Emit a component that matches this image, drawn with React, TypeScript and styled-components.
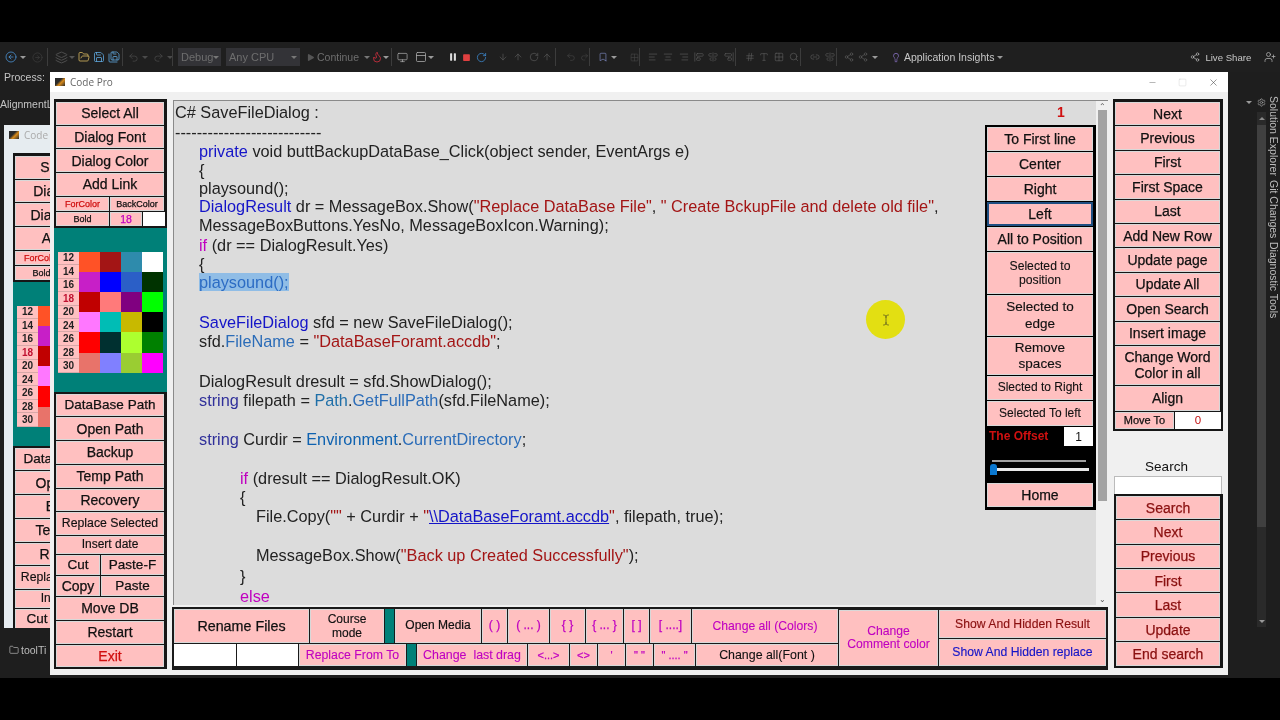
import React from "react";
import styled, { createGlobalStyle } from "styled-components";
import {
  CircleArrowLeft, CircleArrowRight, Layers, FolderOpen, Save, SaveAll, Undo2, Redo2, Play, Flame,
  Monitor, PanelTop, Pause, Square, RotateCw, ArrowDown, ArrowUp, Bookmark, Grid2x2, AlignLeft, AlignCenter,
  AlignRight, AlignStartVertical, AlignCenterVertical, AlignEndVertical, Search, Hash, Minus, X,
  Lightbulb, Share2, UserPlus, Settings, Folder, Link2, Type, TextCursor
} from "lucide-react";

const Global = createGlobalStyle`
  html, body { margin: 0; padding: 0; background: #000; }
  body { font-family: "Liberation Sans", Arial, sans-serif; overflow: hidden; }
  * { box-sizing: border-box; }
`;

const PINK = "#ffc0c0";
const TEAL = "#008078";

const Desktop = styled.div`
  position: relative; width: 1280px; height: 720px; background: #000; overflow: hidden;
  display: flex; flex-direction: column; filter: blur(0.35px);
`;
const Letterbox = styled.div`height: ${p => p.$h}px; flex: none; background: #000;`;
const Studio = styled.div`
  flex: 1; background: #1e1e1e; display: flex; flex-direction: column; color: #c8c8c8; min-height: 0;
`;
const Toolbar = styled.div`
  height: 30px; flex: none; display: flex; align-items: center; position: relative; background: #1f1f1f;
  font-size: 10.5px;
`;
const Slot = styled.span`
  width: ${p => p.$w}px; flex: none; display: flex; align-items: center; color: ${p => p.$c || "#5a5a5a"};
`;
const Caret = styled.span`
  width: 0; height: 0; border-left: 3px solid transparent; border-right: 3px solid transparent;
  border-top: 3px solid ${p => p.$c || "#9a9a9a"};
`;
const CaretUp = styled(Caret)`
  border-top: none; border-bottom: 3px solid #8a8a8a; flex: none;
`;
const Sep = styled.span`width: 1px; height: 18px; background: #3c3c3c;`;
const Combo = styled.span`
  width: ${p => p.$w}px; height: 18px; flex: none; background: #333337; color: #6e6e6e; display: flex;
  align-items: center; justify-content: space-between; padding: 0 3px; font-size: 11px; margin-right: ${p => p.$mr}px;
`;
const DimLabel = styled.span`font-size: ${p => p.$fs || 10.5}px; color: ${p => p.$c || "#6e6e6e"}; white-space: nowrap;`;
const StudioBody = styled.div`flex: 1; display: flex; min-height: 0;`;
const LeftPane = styled.div`flex: 1; display: flex; flex-direction: column; padding-left: 4px;`;
const ProcessRow = styled.div`height: 10px; font-size: 10.5px; display: flex; align-items: center; color: #c4c4c4;`;
const TabText = styled.div`margin: 16px 0 0 -4px; font-size: 10.5px; color: #c4c4c4;`;
const StatusText = styled.div`
  margin-top: auto; margin-bottom: 22px; margin-left: 5px; font-size: 10.5px; color: #bdbdbd; display: flex; align-items: center; gap: 2px;
`;
const RightRail = styled.div`width: 280px; flex: none; display: flex; justify-content: flex-end; padding-top: 24px;`;
const ScrollCol = styled.div`width: 22px; margin-right: 0; flex: none; display: flex; flex-direction: column; align-items: flex-end;`;
const RailHead = styled.div`height: 16px; width: 100%; flex: none; display: flex; align-items: center; justify-content: space-between; padding: 0 0 4px 2px;`;
const ScrollTrack = styled.div`
  width: 9px; height: 515px; flex: none; background: #2a2a2a; display: flex; flex-direction: column; align-items: center; padding-top: 5px;
`;
const ScrollThumb = styled.div`width: 9px; height: 402px; margin-top: 5px; background: #404040;`;
const TrackEnd = styled(Caret)`margin-top: auto; margin-bottom: 4px; flex: none;`;
const RailCol = styled.div`
  writing-mode: vertical-rl; font-size: 10.5px; color: #bcbcbc; width: 14px; height: 230px; display: flex; gap: 4px; white-space: nowrap;
  flex: none;
`;
const Folded = styled(Settings)`color: #999;`;

/* windows on the desktop */
const Win = styled.div`
  position: absolute; left: ${p => p.$x}px; top: ${p => p.$y}px; width: ${p => p.$w}px; height: ${p => p.$h}px;
  background: ${p => p.$bg}; overflow: hidden; display: flex; flex-direction: column;
`;
const TitleBar = styled.div`
  height: 20px; flex: none; background: ${p => p.$bg || "#fff"}; display: flex; align-items: center; padding-left: 5px;
  font-size: 10px; color: ${p => p.$c || "#666"}; gap: 5px; font-family: "Open Sans", "Liberation Sans", sans-serif;
`;
const AppIcon = styled.span`
  width: 10px; height: 8px; flex: none; background: linear-gradient(135deg, #2a2a2a 40%, #d88a1a 60%, #2a2a2a);
`;
const WinControls = styled.div`margin-left: auto; display: flex; align-items: center; color: #777; padding-right: 9px; gap: 21px;`;
const WinBody = styled.div`flex: 1; display: flex; gap: 5px; padding: ${p => p.$pad}; min-height: 0; background: ${p => p.$bg};`;

const SideCol = styled.div`width: 113px; flex: none; display: flex; flex-direction: column;`;
const Panel = styled.div`
  background: #161616; padding: ${p => p.$pt ?? 3}px 3px 2px 2px; margin-left: ${p => p.$ml || 0}px;
  display: flex; flex-direction: column; gap: 1px; flex: none;
`;
const Btn = styled.div`
  height: ${p => (p.$h ? p.$h + "px" : "auto")}; flex: ${p => (p.$grow ? "1 1 0" : "none")}; width: ${p => (p.$w ? p.$w + "px" : "auto")};
  background: ${PINK}; border: 1px solid #d8d8d8; color: ${p => p.$c || "#111"}; font-size: ${p => p.$fs || 14}px;
  display: flex; align-items: center; justify-content: center; text-align: center; line-height: ${p => p.$lh || "1.15"};
  white-space: nowrap; -webkit-text-stroke: ${p => p.$st ?? 0.25}px ${p => p.$c || "#111"}; overflow: hidden;
`;
const FocusBtn = styled(Btn)`border: 2px solid #1f4f82;`;
const Row = styled.div`display: flex; gap: 1px; flex: none;`;
const WhiteCell = styled.div`
  height: ${p => p.$h}px; width: ${p => p.$w}px; flex: none; background: #fff; color: ${p => p.$c || "#111"}; font-size: ${p => p.$fs || 12}px;
  display: flex; align-items: center; justify-content: center;
`;
const PalettePanel = styled.div`
  height: 164px; flex: none; background: ${TEAL}; padding: 24px 0 0 4px; display: flex;
`;
const Sizes = styled.div`
  width: 21px; height: 121px; flex: none; background: ${PINK}; display: grid; grid-template-rows: repeat(9, 1fr);
`;
const Size = styled.div`
  font-size: 10px; font-weight: 700; color: ${p => (p.$on ? "#c01030" : "#222")}; display: flex; align-items: center; justify-content: center;
  border-bottom: 1px solid #d8a8a8;
`;
const Swatches = styled.div`
  width: 84px; height: 121px; flex: none; display: grid; grid-template-columns: repeat(4, 1fr); grid-template-rows: repeat(6, 1fr);
`;
const Swatch = styled.div`background: ${p => p.$c};`;

const Center = styled.div`flex: 1; min-width: 0; display: flex; flex-direction: column; gap: 2px;`;
const EditorWrap = styled.div`
  position: relative; height: 505px; flex: none; display: flex; border-top: 1px solid #8a8a8a; border-left: 1px solid #8a8a8a; margin: 1px 0 0 1px;
  background: #dcdcdc;
`;
const Editor = styled.div`
  flex: 1; min-width: 0; padding: 1px 0 0 1px; overflow: hidden; font-size: 16.3px; color: #222;
  font-family: "Liberation Sans", Arial, sans-serif;
`;
const Line = styled.div`padding-left: ${p => p.$i || 0}px; height: ${p => p.$h}px; line-height: ${p => p.$h}px; white-space: nowrap;`;
const Tok = styled.span`color: ${p => p.$c}; text-decoration: ${p => (p.$u ? "underline" : "none")};`;
const Selected = styled.span`background: #90bde6; color: #2c6cc4;`;
const Scroll = styled.div`
  width: 12px; flex: none; background: #f0f0f0; display: flex; flex-direction: column; align-items: center; justify-content: space-between; color: #555;
  font-size: 8px;
`;
const Thumb = styled.div`width: 9px; height: 392px; background: #a3a3a3; margin-bottom: 93px; margin-top: -2px;`;
const Arrow = styled.span`height: 11px; line-height: 11px; color: #555; font-size: 8px;`;
const Counter = styled.div`
  position: absolute; left: 883px; top: 3px; color: #d01010; font-size: 14px; font-weight: 700;
`;
const FloatPanel = styled.div`
  position: absolute; left: 811px; top: 24px; width: 111px; background: #000; padding: 2px 3px 3px 2px; display: flex; flex-direction: column; gap: 1px;
`;
const OffsetBlock = styled.div`height: 55px; flex: none; background: #000; display: flex; flex-direction: column;`;
const OffsetHead = styled.div`display: flex; justify-content: space-between; align-items: center; height: 19px;`;
const OffsetLabel = styled.span`color: #d01010; font-size: 12px; font-weight: 700; padding-left: 2px; margin-top: -1px;`;
const SliderBox = styled.div`position: relative; height: 20px; margin: 14px 0 0 3px; width: 100px;`;
const TrackTop = styled.div`position: absolute; left: 2px; top: 0; width: 94px; height: 2px; background: #a0a0a0;`;
const TrackMain = styled.div`position: absolute; left: 2px; top: 8px; width: 97px; height: 3px; background: #e8e8e8;`;
const SliderThumb = styled.div`
  position: absolute; left: 0; top: 4px; width: 7px; height: 11px; background: #0a78d0; border-radius: 3px 3px 0 0;
`;

const Bottom = styled.div`
  height: 63px; flex: none; background: #1a1a1a; padding: 2px 2px 4px; display: flex; gap: 1px;
`;
const BottomLeft = styled.div`width: 664px; flex: none; display: flex; flex-direction: column; gap: 1px;`;
const BottomRow = styled.div`display: flex; gap: 1px; height: ${p => p.$h}px; flex: none; min-height: 0;`;
const TealGap = styled.div`width: ${p => p.$w}px; flex: none; background: ${TEAL};`;
const BottomStack = styled.div`
  flex: ${p => (p.$w ? "none" : 1)}; width: ${p => (p.$w ? p.$w + "px" : "auto")};
  display: flex; flex-direction: column; gap: 1px; margin-top: 1px;
`;

const RightCol = styled.div`width: 110px; flex: none; display: flex; flex-direction: column;`;
const SearchLabel = styled.div`margin-top: 28px; height: 15px; text-align: center; font-size: 13.5px; color: #111; line-height: 15px; padding-right: 3px;`;
const SearchInput = styled.div`height: 18px; margin: 2px 1px 0; background: #fff; border: 1px solid #bbb; border-bottom: none;`;

const Cursor = styled.div`
  position: absolute; left: 692px; top: 199px; width: 39px; height: 39px; border-radius: 50%; background: #e3df12;
  display: flex; align-items: center; justify-content: center; color: #5a5a20;
`;

const M = "#c000c0";
const B = "#1515c8";
const S = "#a31515";
const L = "#2b6cb8";

const code: [number, number, React.ReactNode][] = [
  [0, 20, <>C# SaveFileDialog :</>],
  [0, 20, <>---------------------------</>],
  [24, 18.5, <><Tok $c={B}>private</Tok> void buttBackupDataBase_Click(object sender, EventArgs e)</>],
  [24, 18, <>{"{"}</>],
  [24, 18.5, <>playsound();</>],
  [24, 19, <><Tok $c={B}>DialogResult</Tok> dr = MessageBox.Show(<Tok $c={S}>"Replace DataBase File"</Tok>, <Tok $c={S}>" Create BckupFile and delete old file"</Tok>,</>],
  [24, 19.5, <>MessageBoxButtons.YesNo, MessageBoxIcon.Warning);</>],
  [24, 19, <><Tok $c={M}>if</Tok> (dr == DialogResult.Yes)</>],
  [24, 18, <>{"{"}</>],
  [24, 19.5, <Selected>playsound();</Selected>],
  [24, 19.5, <>&nbsp;</>],
  [24, 20, <><Tok $c={B}>SaveFileDialog</Tok> sfd = new SaveFileDialog();</>],
  [24, 19.5, <>sfd.<Tok $c={L}>FileName</Tok> = <Tok $c={S}>"DataBaseForamt.accdb"</Tok>;</>],
  [24, 19.5, <>&nbsp;</>],
  [24, 20, <>DialogResult dresult = sfd.ShowDialog();</>],
  [24, 19.5, <><Tok $c="#30309a">string</Tok> filepath = <Tok $c="#1f6fa8">Path</Tok>.<Tok $c={L}>GetFullPath</Tok>(sfd.FileName);</>],
  [24, 19.5, <>&nbsp;</>],
  [24, 19.5, <><Tok $c="#30309a">string</Tok> Curdir = <Tok $c="#0f62b0">Environment</Tok>.<Tok $c={L}>CurrentDirectory</Tok>;</>],
  [24, 19.5, <>&nbsp;</>],
  [65, 19.5, <><Tok $c={M}>if</Tok> (dresult == DialogResult.OK)</>],
  [65, 19, <>{"{"}</>],
  [81, 19.5, <>File.Copy(<Tok $c={S}>""</Tok> + Curdir + <Tok $c={S}>"</Tok><Tok $c="#1515c8" $u>\\DataBaseForamt.accdb</Tok><Tok $c={S}>"</Tok>, filepath, true);</>],
  [81, 19.5, <>&nbsp;</>],
  [81, 19.5, <>MessageBox.Show(<Tok $c={S}>"Back up Created Successfully"</Tok>);</>],
  [65, 20, <>{"}"}</>],
  [65, 20, <Tok $c={M}>else</Tok>],
];

const colors = [
  "#ff5226", "#a31515", "#2e8bac", "#ffffff",
  "#c71fc7", "#0000ff", "#2b5fc7", "#003300",
  "#c00000", "#ff7a7a", "#800080", "#00ff00",
  "#ff77ff", "#00bdb5", "#c8b900", "#000000",
  "#ff0000", "#003030", "#adff2f", "#008000",
  "#e8736a", "#8080ff", "#9acd32", "#ff00ff",
];
const sizes = ["12", "14", "16", "18", "20", "24", "26", "28", "30"];

const LeftColumn = () => (
  <SideCol>
    <Panel>
      <Btn $h={22.7}>Select All</Btn>
      <Btn $h={22.7}>Dialog Font</Btn>
      <Btn $h={22.7}>Dialog Color</Btn>
      <Btn $h={22.7}>Add Link</Btn>
      <Row>
        <Btn $h={14} $w={53} $fs={9} $c="#d01010">ForColor</Btn>
        <Btn $h={14} $grow $fs={9}>BackColor</Btn>
      </Row>
      <Row>
        <Btn $h={14} $w={53} $fs={9}>Bold</Btn>
        <Btn $h={14} $w={32} $fs={10.5} $c={M}>18</Btn>
        <WhiteCell $h={14} $w={22} />
      </Row>
    </Panel>
    <PalettePanel>
      <Sizes>{sizes.map(s => <Size key={s} $on={s === "18"}>{s}</Size>)}</Sizes>
      <Swatches>{colors.map((c, i) => <Swatch key={i} $c={c} />)}</Swatches>
    </PalettePanel>
    <Panel $pt={2}>
      <Btn $h={22.7} $fs={13.5}>DataBase Path</Btn>
      <Btn $h={22.7}>Open Path</Btn>
      <Btn $h={22.7}>Backup</Btn>
      <Btn $h={22.7}>Temp Path</Btn>
      <Btn $h={22.7}>Recovery</Btn>
      <Btn $h={22.7} $fs={12.3} $st={0.15}>Replace Selected</Btn>
      <Btn $h={18} $fs={12} $st={0.15}>Insert date</Btn>
      <Row>
        <Btn $h={20} $w={44} $fs={13.5}>Cut</Btn>
        <Btn $h={20} $grow $fs={13.5}>Paste-F</Btn>
      </Row>
      <Row>
        <Btn $h={20} $w={44} $fs={14}>Copy</Btn>
        <Btn $h={20} $grow $fs={13.5}>Paste</Btn>
      </Row>
      <Btn $h={23}>Move DB</Btn>
      <Btn $h={22.7}>Restart</Btn>
      <Btn $h={22.7} $c="#d01010">Exit</Btn>
    </Panel>
  </SideCol>
);

type TI = { w: number; el?: React.ReactNode; c?: string };
const ic = (I: any, s = 13) => <I size={s} strokeWidth={1.6} />;
const tools: TI[] = [
  { w: 5 },
  { w: 15, el: ic(CircleArrowLeft, 12), c: "#4a90d0" },
  { w: 12, el: <Caret /> },
  { w: 15, el: ic(CircleArrowRight, 11), c: "#3c3c3c" },
  { w: 8, el: <Sep /> },
  { w: 14, el: ic(Layers), c: "#555" },
  { w: 9, el: <Caret $c="#555" /> },
  { w: 15, el: ic(FolderOpen, 12), c: "#d8b860" },
  { w: 15, el: ic(Save, 12), c: "#5fa8e0" },
  { w: 14, el: ic(SaveAll, 12), c: "#5fa8e0" },
  { w: 6, el: <Sep /> },
  { w: 14, el: ic(Undo2, 11), c: "#4a4a4a" },
  { w: 11, el: <Caret $c="#4a4a4a" /> },
  { w: 14, el: ic(Redo2, 11), c: "#4a4a4a" },
  { w: 5, el: <Caret $c="#4a4a4a" /> },
  { w: 6, el: <Sep /> },
  { w: 48, el: <Combo $w={43} $mr={5}>Debug<Caret $c="#777" /></Combo> },
  { w: 80, el: <Combo $w={74} $mr={6}>Any CPU<Caret $c="#777" /></Combo> },
  { w: 11, el: <Play size={9} fill="#555" strokeWidth={0} />, c: "#555" },
  { w: 47, el: <DimLabel>Continue</DimLabel> },
  { w: 7, el: <Caret $c="#777" /> },
  { w: 12, el: ic(Flame, 12), c: "#d83040" },
  { w: 8, el: <Caret /> },
  { w: 6, el: <Sep /> },
  { w: 18, el: ic(Monitor, 11), c: "#aaa" },
  { w: 13, el: ic(PanelTop, 12), c: "#aaa" },
  { w: 5, el: <Caret /> },
  { w: 15 },
  { w: 14, el: <Pause size={10} fill="#ddd" strokeWidth={0} />, c: "#ddd" },
  { w: 14, el: <Square size={9} fill="#e04040" strokeWidth={0} />, c: "#e04040" },
  { w: 22, el: ic(RotateCw, 11), c: "#3f8fd8" },
  { w: 15, el: ic(ArrowDown, 10) },
  { w: 16, el: ic(ArrowUp, 10) },
  { w: 13, el: ic(RotateCw, 10) },
  { w: 13, el: ic(ArrowUp, 10) },
  { w: 11, el: <Sep /> },
  { w: 14, el: ic(Undo2, 10), c: "#444" },
  { w: 9, el: ic(Redo2, 10), c: "#444" },
  { w: 9, el: <Sep /> },
  { w: 13, el: ic(Bookmark, 10), c: "#7d8ac0" },
  { w: 19, el: <Caret /> },
  { w: 9, el: ic(Grid2x2, 9), c: "#444" },
  { w: 9, el: <Sep /> },
  { w: 15, el: ic(AlignLeft, 10) },
  { w: 16, el: ic(AlignCenter, 10) },
  { w: 15, el: ic(AlignRight, 10) },
  { w: 14, el: ic(AlignStartVertical, 10) },
  { w: 16, el: ic(AlignCenterVertical, 10) },
  { w: 11, el: ic(AlignEndVertical, 10) },
  { w: 10, el: <Sep /> },
  { w: 14, el: ic(Hash, 10) },
  { w: 15, el: ic(Type, 10) },
  { w: 15, el: ic(Grid2x2, 10) },
  { w: 11, el: ic(Search, 10) },
  { w: 10, el: <Sep /> },
  { w: 15, el: ic(Link2, 10) },
  { w: 11, el: ic(AlignCenterVertical, 10) },
  { w: 8, el: <Sep /> },
  { w: 14, el: ic(Share2, 10) },
  { w: 14, el: ic(Share2, 10) },
  { w: 19, el: <Caret /> },
  { w: 10, el: ic(Lightbulb, 11), c: "#9a7fe0" },
];

export default function App() {
  return (
    <Desktop>
      <Global />
      <Letterbox $h={42} />
      <Studio>
        <Toolbar>
          {tools.map((t, i) => <Slot key={i} $w={t.w} $c={t.c}>{t.el}</Slot>)}
          <DimLabel $c="#c8c8c8">&nbsp;Application Insights</DimLabel>
          <Slot $w={18} $c="#aaa">&nbsp;<Caret /></Slot>
          <Slot $w={178} />
          <Slot $w={15} $c="#bbb">{ic(Share2, 10)}</Slot>
          <DimLabel $c="#c8c8c8" $fs={9.6}>Live Share</DimLabel>
          <Slot $w={13} />
          <Slot $w={14} $c="#aaa">{ic(UserPlus, 12)}</Slot>
        </Toolbar>
        <StudioBody>
          <LeftPane>
            <ProcessRow>Process:</ProcessRow>
            <TabText>AlignmentLi</TabText>
            <StatusText><Folder size={10} strokeWidth={1.6} />toolTi</StatusText>
          </LeftPane>
          <RightRail>
            <ScrollCol>
              <RailHead><Caret /><Folded size={9} /></RailHead>
              <ScrollTrack>
                <CaretUp />
                <ScrollThumb />
                <TrackEnd />
              </ScrollTrack>
            </ScrollCol>
            <RailCol><span>Solution Explorer</span><span>Git Changes</span><span>Diagnostic Tools</span></RailCol>
          </RightRail>
        </StudioBody>
      </Studio>
      <Letterbox $h={42} />

      <Win $x={4} $y={125} $w={160} $h={503} $bg="#e6ecf0">
        <TitleBar $bg="#e6ecf0" $c="#aaa"><AppIcon />Code</TitleBar>
        <WinBody $pad="8px 0 0 9px" $bg="#e6ecf0"><LeftColumn /></WinBody>
      </Win>

      <Win $x={50} $y={72} $w={1178} $h={603} $bg="#f0f0f0">
        <TitleBar>
          <AppIcon />Code Pro
          <WinControls>
            <Minus size={9} strokeWidth={1.4} />
            <Square size={9} strokeWidth={0.8} color="#bbb" />
            <X size={11} strokeWidth={1.2} color="#444" />
          </WinControls>
        </TitleBar>
        <WinBody $pad="7px 5px 0 4px" $bg="#f0f0f0">
          <LeftColumn />
          <Center>
            <EditorWrap>
              <Editor>
                {code.map(([i, h, c], n) => <Line key={n} $i={i} $h={h}>{c}</Line>)}
              </Editor>
              <Scroll>
                <Arrow>⌃</Arrow>
                <Thumb />
                <Arrow>⌄</Arrow>
              </Scroll>
              <Counter>1</Counter>
              <FloatPanel>
                <Btn $h={24}>To First line</Btn>
                <Btn $h={24}>Center</Btn>
                <Btn $h={24}>Right</Btn>
                <FocusBtn $h={24}>Left</FocusBtn>
                <Btn $h={24}>All to Position</Btn>
                <Btn $h={42} $fs={12.2} $st={0.1} $lh="1.15">Selected to<br />position</Btn>
                <Btn $h={41} $fs={13.5} $st={0.15} $lh="1.2">Selected to<br />edge</Btn>
                <Btn $h={38} $fs={13.5} $st={0.15} $lh="1.2">Remove<br />spaces</Btn>
                <Btn $h={24} $fs={12} $st={0.1}>Slected to Right</Btn>
                <Btn $h={25} $fs={12} $st={0.1}>Selected To left</Btn>
                <OffsetBlock>
                  <OffsetHead>
                    <OffsetLabel>The Offset</OffsetLabel>
                    <WhiteCell $h={19} $w={29} $fs={12}>1</WhiteCell>
                  </OffsetHead>
                  <SliderBox>
                    <TrackTop />
                    <TrackMain />
                    <SliderThumb />
                  </SliderBox>
                </OffsetBlock>
                <Btn $h={24}>Home</Btn>
              </FloatPanel>
              <Cursor><TextCursor size={12} strokeWidth={1.5} /></Cursor>
            </EditorWrap>
            <Bottom>
              <BottomLeft>
                <BottomRow $h={34}>
                  <Btn $w={135} $fs={14.3}>Rename Files</Btn>
                  <Btn $w={74} $fs={12} $st={0.15} $lh="1.2">Course<br />mode</Btn>
                  <TealGap $w={9} />
                  <Btn $w={86} $fs={12} $st={0.2}>Open Media</Btn>
                  <Btn $w={25} $fs={12} $c={M}>( )</Btn>
                  <Btn $w={41} $fs={12} $c={M}>( ... )</Btn>
                  <Btn $w={35} $fs={12} $c={M}>{"{ }"}</Btn>
                  <Btn $w={37} $fs={12} $c={M}>{"{ ... }"}</Btn>
                  <Btn $w={25} $fs={12} $c={M}>[ ]</Btn>
                  <Btn $w={41} $fs={12} $c={M}>[ ....]</Btn>
                  <Btn $grow $fs={12.2} $st={0.1} $c={M}>Change all (Colors)</Btn>
                </BottomRow>
                <BottomRow $h={22}>
                  <WhiteCell $h={22} $w={62} />
                  <WhiteCell $h={22} $w={61} />
                  <Btn $w={107} $fs={12.3} $st={0.1} $c={M}>Replace From To</Btn>
                  <TealGap $w={9} />
                  <Btn $w={110} $fs={12.4} $st={0.1} $c={M}>Change&nbsp; last drag</Btn>
                  <Btn $w={41} $fs={11} $c={M}>{"<...>"}</Btn>
                  <Btn $w={27} $fs={11} $c={M}>{"<>"}</Btn>
                  <Btn $w={27} $fs={11} $c={M}>'</Btn>
                  <Btn $w={27} $fs={11} $c={M}>" "</Btn>
                  <Btn $w={41} $fs={11} $c={M}>" .... "</Btn>
                  <Btn $grow $fs={12.4} $st={0.1}>Change all(Font )</Btn>
                </BottomRow>
              </BottomLeft>
              <BottomStack $w={99}>
                <Btn $grow $fs={12.2} $st={0.1} $c={M} $lh="1.1">Change<br />Comment color</Btn>
              </BottomStack>
              <BottomStack>
                <Btn $grow $fs={12.2} $st={0.15} $c="#8a1010">Show And Hidden Result</Btn>
                <Btn $grow $fs={12.2} $st={0.15} $c="#1515c8">Show And Hidden replace</Btn>
              </BottomStack>
            </Bottom>
          </Center>
          <RightCol>
            <Panel>
              <Btn $h={23.4}>Next</Btn>
              <Btn $h={23.4}>Previous</Btn>
              <Btn $h={23.4}>First</Btn>
              <Btn $h={23.4}>First Space</Btn>
              <Btn $h={23.4}>Last</Btn>
              <Btn $h={23.4}>Add New Row</Btn>
              <Btn $h={23.4}>Update page</Btn>
              <Btn $h={23.4}>Update All</Btn>
              <Btn $h={23.4}>Open Search</Btn>
              <Btn $h={23.4}>Insert image</Btn>
              <Btn $h={39} $lh="1.2">Change Word<br />Color in all</Btn>
              <Btn $h={25}>Align</Btn>
              <Row>
                <Btn $h={17} $w={59} $fs={11}>Move To</Btn>
                <WhiteCell $h={17} $w={46} $fs={11.5} $c="#c01010">0</WhiteCell>
              </Row>
            </Panel>
            <SearchLabel>Search</SearchLabel>
            <SearchInput />
            <Panel $pt={2} $ml={1}>
              <Btn $h={23.4} $c="#8a1010">Search</Btn>
              <Btn $h={23.4} $c="#8a1010">Next</Btn>
              <Btn $h={23.4} $c="#8a1010">Previous</Btn>
              <Btn $h={23.4} $c="#8a1010">First</Btn>
              <Btn $h={23.4} $c="#8a1010">Last</Btn>
              <Btn $h={23.4} $c="#8a1010">Update</Btn>
              <Btn $h={23.4} $c="#8a1010">End search</Btn>
            </Panel>
          </RightCol>
        </WinBody>
      </Win>
    </Desktop>
  );
}
